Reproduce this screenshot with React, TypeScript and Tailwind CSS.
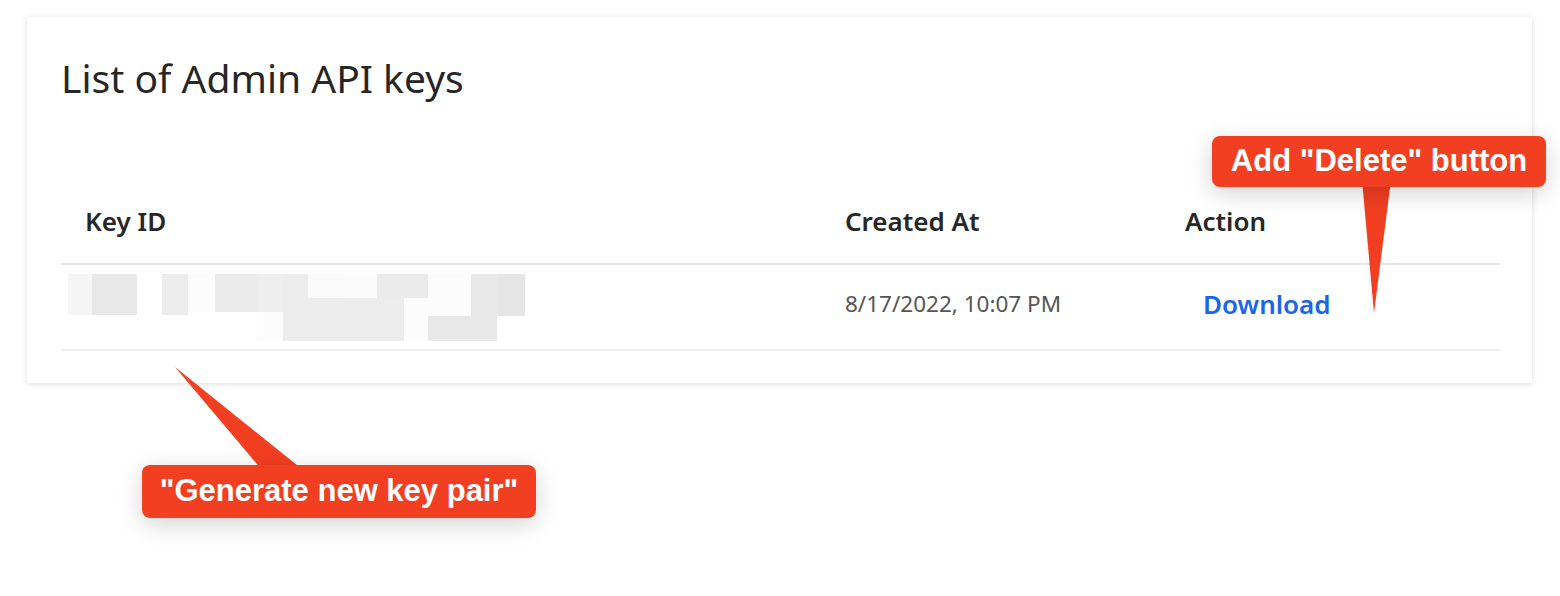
import React from 'react';

// pixelated blur that hides the key id
const blurBlocks: [number, number, number, number, string][] = [
  [0, 0, 24, 41, '#f5f5f5'],
  [24, 0, 45, 41, '#e8e8e8'],
  [94, 0, 26, 41, '#ececec'],
  [120, 0, 27, 38, '#fcfcfc'],
  [147, 0, 42, 38, '#ebebeb'],
  [189, 0, 26, 38, '#eeeeee'],
  [189, 38, 26, 29, '#fcfcfc'],
  [215, 0, 25, 38, '#ececec'],
  [215, 38, 25, 29, '#ececec'],
  [240, 0, 37, 24, '#fafafa'],
  [240, 24, 37, 43, '#ececec'],
  [277, 0, 32, 24, '#fbfbfb'],
  [277, 24, 32, 43, '#ececec'],
  [309, 0, 27, 24, '#ebebeb'],
  [309, 24, 27, 43, '#ececec'],
  [336, 0, 24, 24, '#ebebeb'],
  [336, 24, 24, 43, '#fcfcfc'],
  [360, 0, 43, 42, '#fcfcfc'],
  [360, 42, 43, 25, '#e8e8e8'],
  [403, 0, 26, 67, '#e8e8e8'],
  [429, 0, 28, 42, '#e5e5e5'],
];

function BlurredKey() {
  return (
    <svg width="457" height="67" viewBox="0 0 457 67" className="block">
      {blurBlocks.map(([x, y, w, h, c], i) => (
        <rect key={i} x={x} y={y} width={w} height={h} fill={c} />
      ))}
    </svg>
  );
}

export default function App() {
  return (
    <div className="relative w-[1560px] h-[596px] bg-white overflow-hidden font-['Noto_Sans',sans-serif]">
      {/* Card */}
      <div className="absolute left-[27px] top-[17px] w-[1505px] h-[366px] bg-white shadow-[0_1px_6px_rgba(0,0,0,0.14)] pl-[34px] pr-[32px] pt-[37px]">
        <h1 className="text-[39px] leading-[48px] text-[#262626]">List of Admin API keys</h1>

        <div className="mt-[77px]">
          <div className="grid grid-cols-[760px_340px_1fr] h-[86px] items-center border-b-2 border-[#e6e6e6] text-[26px] font-semibold text-[#262626]">
            <div className="pl-[24px]">Key ID</div>
            <div className="pl-[24px]">Created At</div>
            <div className="pl-[24px]">Action</div>
          </div>
          <div className="grid grid-cols-[760px_340px_1fr] h-[86px] items-center border-b-2 border-[#efefef]">
            <div className="pl-[7px]">
              <BlurredKey />
            </div>
            <div className="pl-[24px] pb-[6px] text-[22.5px] text-[#555555]">8/17/2022, 10:07 PM</div>
            <div className="pl-[42px] pb-[6px] text-[26px] font-semibold text-[#1b66e8]">Download</div>
          </div>
        </div>
      </div>

      {/* Annotations */}
      <svg className="absolute left-0 top-0" width="1560" height="596">
        <polygon points="1362,180 1391,180 1374,313" fill="#f23f22" />
        <polygon points="175,367 262,470 303,470" fill="#f23f22" />
      </svg>
      <div className="absolute left-[1212px] top-[136px] w-[334px] h-[51px] rounded-[8px] bg-[#f23f22] shadow-[0_6px_24px_rgba(0,0,0,0.18)] flex items-center justify-center font-['Liberation_Sans',Arial,sans-serif] font-bold text-white text-[31px]">
        Add "Delete" button
      </div>
      <div className="absolute left-[142px] top-[465px] w-[394px] h-[53px] rounded-[8px] bg-[#f23f22] shadow-[0_6px_24px_rgba(0,0,0,0.18)] flex items-center justify-center font-['Liberation_Sans',Arial,sans-serif] font-bold text-white text-[31px]">
        "Generate new key pair"
      </div>
    </div>
  );
}
